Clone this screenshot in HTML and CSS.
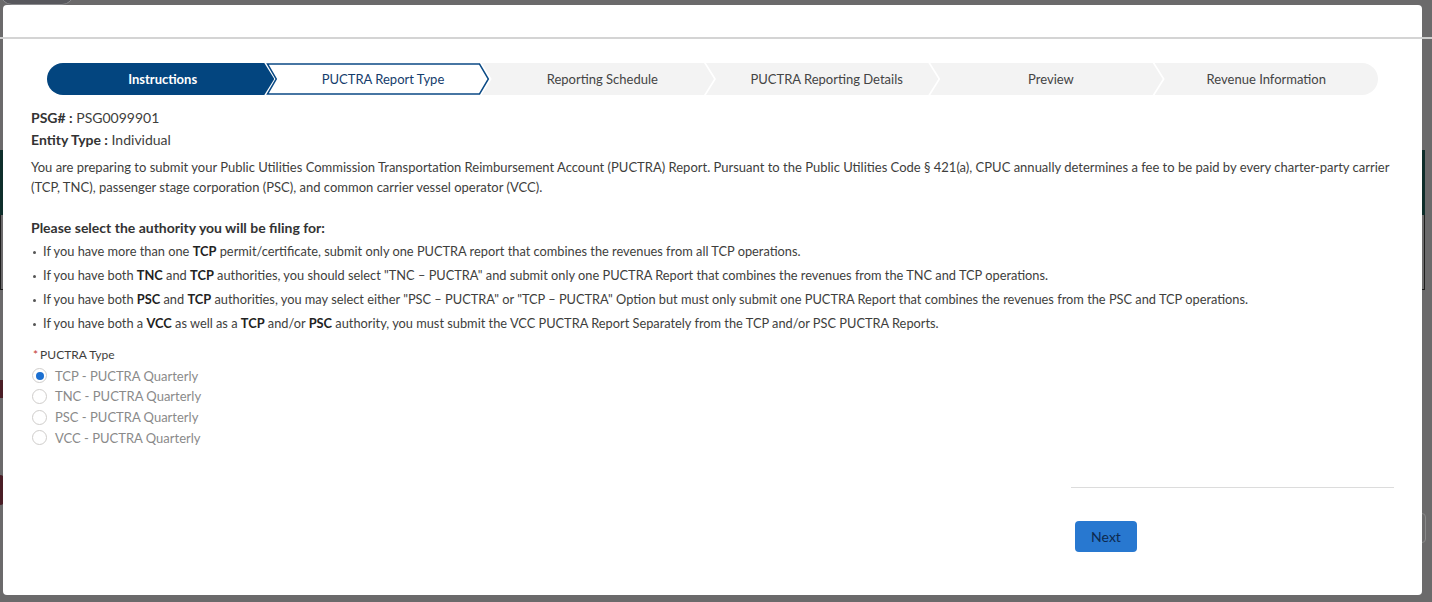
FILE: index.html
```html
<!DOCTYPE html>
<html lang="en">
<head>
<meta charset="utf-8">
<title>PUCTRA Report</title>
<link rel="stylesheet" href="styles.css">
</head>
<body>
  <div class="page">
    <div class="page-topbar"><span class="page-pill"></span></div>
    <div class="page-card">
      <div class="page-card-head"></div>
      <div class="page-card-body"></div>
    </div>
    <div class="page-mark page-mark-a"></div>
    <div class="page-mark page-mark-b"></div>
    <div class="page-box"></div>
  </div>

  <section class="modal" role="dialog" aria-label="PUCTRA Report">
    <header class="modal-header"></header>
    <div class="modal-body">
      <ol class="stepper">
        <li class="step step-first step-done"><span class="step-label">Instructions</span></li>
        <li class="step step-current">
          <svg class="step-outline" viewBox="0 0 228 32" preserveAspectRatio="none" aria-hidden="true">
            <path d="M1.5 1 H218 L227 16 L218 31 H1.5 L10.5 16 Z" fill="#fff" stroke="#0b4a85" stroke-width="1.5" stroke-linejoin="miter"/>
          </svg>
          <span class="step-label">PUCTRA Report Type</span>
        </li>
        <li class="step step-mid"><span class="step-label">Reporting Schedule</span></li>
        <li class="step step-mid"><span class="step-label">PUCTRA Reporting Details</span></li>
        <li class="step step-mid"><span class="step-label">Preview</span></li>
        <li class="step step-last"><span class="step-label">Revenue Information</span></li>
      </ol>

      <div class="info">
        <div class="info-row"><b>PSG# :</b> PSG0099901</div>
        <div class="info-row"><b>Entity Type :</b> Individual</div>
      </div>

      <p class="intro">You are preparing to submit your Public Utilities Commission Transportation Reimbursement Account (PUCTRA) Report. Pursuant to the Public Utilities Code § 421(a), CPUC annually determines a fee to be paid by every charter-party carrier (TCP, TNC), passenger stage corporation (PSC), and common carrier vessel operator (VCC).</p>

      <h2 class="select-title">Please select the authority you will be filing for:</h2>
      <ul class="rules">
        <li>If you have more than one <b>TCP</b> permit/certificate, submit only one PUCTRA report that combines the revenues from all TCP operations.</li>
        <li>If you have both <b>TNC</b> and <b>TCP</b> authorities, you should select "TNC – PUCTRA" and submit only one PUCTRA Report that combines the revenues from the TNC and TCP operations.</li>
        <li>If you have both <b>PSC</b> and <b>TCP</b> authorities, you may select either "PSC – PUCTRA" or "TCP – PUCTRA" Option but must only submit one PUCTRA Report that combines the revenues from the PSC and TCP operations.</li>
        <li>If you have both a <b>VCC</b> as well as a <b>TCP</b> and/or <b>PSC</b> authority, you must submit the VCC PUCTRA Report Separately from the TCP and/or PSC PUCTRA Reports.</li>
      </ul>

      <fieldset class="radio-group">
        <legend class="radio-legend"><abbr class="required" title="required">*</abbr>PUCTRA Type</legend>
        <label class="radio"><span class="radio-dot radio-dot-on"></span>TCP - PUCTRA Quarterly</label>
        <label class="radio"><span class="radio-dot"></span>TNC - PUCTRA Quarterly</label>
        <label class="radio"><span class="radio-dot"></span>PSC - PUCTRA Quarterly</label>
        <label class="radio"><span class="radio-dot"></span>VCC - PUCTRA Quarterly</label>
      </fieldset>

      <footer class="modal-footer">
        <div class="footer-actions">
          <button class="btn-next" type="button">Next</button>
        </div>
      </footer>
    </div>
  </section>
</body>
</html>
```

FILE: styles.css
```css
* { box-sizing: border-box; }

html, body {
  margin: 0;
  padding: 0;
}

body {
  width: 1432px;
  height: 602px;
  overflow: hidden;
  background: #6b6a6b;
  font-family: Lato, "Open Sans", Arial, sans-serif;
  color: #3e3e3c;
}

/* ---------- dimmed page underneath ---------- */
.page {
  display: flex;
  flex-direction: column;
}

.page-topbar {
  height: 39px;
  border-bottom: 2px solid #cdcdcd;
  overflow: hidden;
}

.page-pill {
  display: block;
  width: 74px;
  height: 24px;
  margin-top: -19px;
  border: 1px solid #8b8b8e;
  border-radius: 12px;
  background: #58585d;
}

.page-card {
  width: 1425px;
  margin-top: 111px;
}

.page-card-head {
  height: 65px;
  background: #0e2e2b;
}

.page-card-body {
  height: 75px;
  border: 1px solid #1f1f1f;
  border-top: 0;
}

.page-mark {
  width: 4px;
  background: #4a1e26;
}

.page-mark-a {
  height: 18px;
  margin-top: 90px;
}

.page-mark-b {
  height: 30px;
  margin-top: 77px;
  border-radius: 0 4px 4px 0;
}

.page-box {
  width: 30px;
  height: 30px;
  margin-top: 8px;
  margin-left: 1396px;
  border: 1px solid #8a8a8a;
  border-radius: 4px;
}

/* ---------- modal ---------- */
.modal {
  position: fixed;
  left: 3px;
  top: 5px;
  width: 1419px;
  height: 590px;
  background: #fff;
  border-radius: 4px;
  display: flex;
  flex-direction: column;
}

.modal-header {
  height: 34px;
  flex: none;
  border-bottom: 2px solid #d4d4d4;
}

.modal-body {
  flex: 1;
  padding: 24px 28px 0;
  display: flex;
  flex-direction: column;
}

/* ---------- stepper ---------- */
.stepper {
  display: flex;
  list-style: none;
  margin: 0 16px;
  padding: 0;
  height: 32px;
}

.step {
  flex: 1 1 0;
  height: 32px;
  display: grid;
  place-items: center;
  font-size: 13px;
  color: #444;
  background: #f3f3f3;
}

.step + .step {
  margin-left: -8px;
}

.step-label {
  grid-area: 1 / 1;
  position: relative;
  white-space: nowrap;
}

.step-first {
  padding-left: 4px;
  border-radius: 16px 0 0 16px;
  clip-path: polygon(0 0, calc(100% - 10px) 0, 100% 50%, calc(100% - 10px) 100%, 0 100%);
}

.step-done {
  background: #03457f;
  color: #fff;
  font-weight: 700;
}

.step-current {
  background: transparent;
  color: #153c6c;
  padding-left: 0;
}

.step-current .step-label {
  padding-left: 10px;
}

.step-outline {
  grid-area: 1 / 1;
  width: 100%;
  height: 32px;
  display: block;
  justify-self: stretch;
}

.step-mid {
  padding-left: 9px;
  clip-path: polygon(0 0, calc(100% - 10px) 0, 100% 50%, calc(100% - 10px) 100%, 0 100%, 10px 50%);
}

.step-last {
  padding-left: 0;
  border-radius: 0 16px 16px 0;
  clip-path: polygon(0 0, 100% 0, 100% 100%, 0 100%, 10px 50%);
}

/* ---------- content ---------- */
.info {
  margin-top: 11px;
  font-size: 14px;
}

.info-row {
  line-height: 23px;
}

.info-row + .info-row {
  line-height: 22px;
}

.info-row b {
  font-weight: 700;
  color: #333;
}

.intro {
  margin: 6px 0 0;
  font-size: 13px;
  line-height: 20px;
}

.select-title {
  margin: 20px 0 0;
  font-size: 14px;
  line-height: 22px;
  font-weight: 700;
  color: #333;
}

.rules {
  list-style: none;
  margin: 0;
  padding: 0;
  font-size: 12.8px;
  line-height: 24px;
}

.rules li {
  padding-left: 12px;
}

.rules li::before {
  content: "";
  display: inline-block;
  width: 3px;
  height: 3px;
  border-radius: 50%;
  background: #555;
  margin-left: -10px;
  margin-right: 7px;
  vertical-align: middle;
}

.rules li b {
  font-weight: 700;
  color: #222;
}

.radio-group {
  border: 0;
  margin: 11px 0 0;
  padding: 0;
  display: flex;
  flex-direction: column;
}

.radio-legend {
  padding: 0;
  font-size: 12px;
  line-height: 18px;
  color: #3e3e3c;
}

.required {
  color: #c23934;
  text-decoration: none;
  margin: 0 2px 0 2px;
}

.radio {
  display: flex;
  align-items: center;
  height: 20.67px;
  font-size: 13px;
  color: #8a8a8a;
}

.radio:first-of-type {
  margin-top: 1.5px;
}

.radio-dot {
  width: 15px;
  height: 15px;
  margin: 0 8px 0 1px;
  border: 1px solid #cfcdcb;
  border-radius: 50%;
  display: grid;
  place-items: center;
  flex: none;
}

.radio-dot-on::after {
  content: "";
  width: 8px;
  height: 8px;
  border-radius: 50%;
  background: #1b6fd1;
}

/* ---------- footer ---------- */
.modal-footer {
  margin-top: 38.5px;
  display: flex;
  justify-content: flex-end;
}

.footer-actions {
  width: 323px;
  border-top: 1px solid #dcdcdc;
  padding: 33px 0 0 4px;
}

.btn-next {
  width: 62px;
  height: 31px;
  border: 0;
  border-radius: 4px;
  background: #2878d0;
  color: #0d2a4f;
  font-family: Lato, Arial, sans-serif;
  font-size: 14px;
  padding: 0;
}
```
